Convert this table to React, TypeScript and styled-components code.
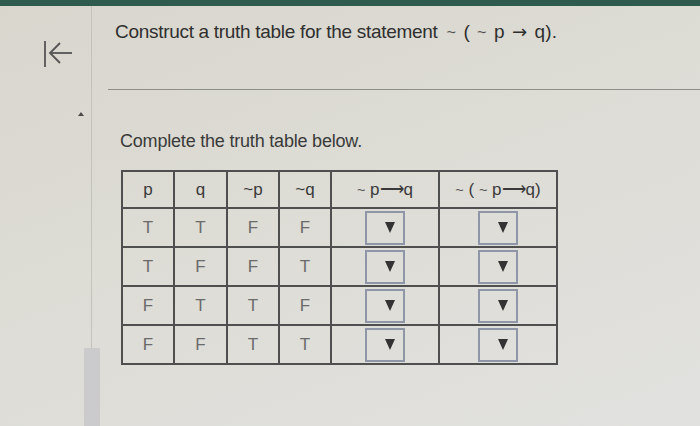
import React from 'react';
import styled, { createGlobalStyle } from 'styled-components';

const GlobalStyle = createGlobalStyle`
  html, body {
    margin: 0;
    padding: 0;
    width: 700px;
    height: 426px;
    overflow: hidden;
    font-family: 'Liberation Sans', Arial, sans-serif;
  }
`;

const Page = styled.div`
  width: 700px;
  height: 426px;
  display: flex;
  flex-direction: column;
  background: linear-gradient(160deg, #d8d6cd 0%, #dddcd5 45%, #e1e1df 100%);
`;

const TopBar = styled.div`
  height: 6px;
  background: #2e5b4d;
  flex-shrink: 0;
`;

const Body = styled.div`
  flex: 1;
  display: flex;
`;

const Sidebar = styled.div`
  width: 91px;
  flex-shrink: 0;
  border-right: 1px solid #c4c3bb;
  display: flex;
  flex-direction: column;
  align-items: flex-end;
`;

const BackButton = styled.div`
  margin: 34px 18px 0 0;
  width: 30px;
  height: 28px;
`;

const UpArrow = styled.div`
  margin: 44px 7px 0 0;
  width: 0;
  height: 0;
  border-left: 3px solid transparent;
  border-right: 3px solid transparent;
  border-bottom: 4px solid #4a4a4a;
`;

const ScrollThumb = styled.div`
  margin: auto -9px 0 0;
  width: 16px;
  height: 78px;
  background: #cbcbce;
`;

const Main = styled.div`
  flex: 1;
  padding-left: 16px;
`;

const Title = styled.div`
  margin: 15px 0 0 7px;
  font-size: 19px;
  line-height: 22px;
  color: #2f2f2f;
  letter-spacing: -0.3px;
`;

const Expr = styled.span`
  margin-left: 2px;
  word-spacing: 1.5px;
  letter-spacing: 0.3px;
`;

const Sym = styled.span`
  color: #555;
  font-size: 0.85em;
`;

const Arrow = styled.span`
  font-family: 'DejaVu Sans', sans-serif;
  font-size: 0.95em;
`;

const Rule = styled.div`
  margin-top: 46px;
  height: 1px;
  background: #8f8f8a;
`;

const Content = styled.div`
  padding-left: 12px;
`;

const Prompt = styled.div`
  margin-top: 40px;
  font-size: 18px;
  line-height: 22px;
  color: #3a3a3a;
  letter-spacing: -0.2px;
`;

const Table = styled.table`
  margin-top: 18px;
  margin-left: 1px;
  border-collapse: collapse;
  border: 2px solid #4f4f4f;
`;

const Cell = styled.td<{ $w: number; $head?: boolean }>`
  width: ${(p) => p.$w}px;
  height: ${(p) => (p.$head ? 35 : 37)}px;
  border: 2px solid #4f4f4f;
  padding: 0;
  text-align: center;
  font-size: 17px;
  color: ${(p) => (p.$head ? '#3a3a3a' : '#6a6a6a')};
`;

const Select = styled.div`
  margin: 0 auto;
  width: 40px;
  height: 34px;
  border: 2px solid #8e96a8;
  display: flex;
  align-items: center;
  justify-content: flex-end;
  padding-right: 8px;
  box-sizing: border-box;
`;

const Caret = styled.div`
  width: 0;
  height: 0;
  border-left: 5px solid transparent;
  border-right: 5px solid transparent;
  border-top: 11px solid #333;
`;

const widths = [50, 51, 50, 50, 106, 116];
const headers: React.ReactNode[] = [
  'p',
  'q',
  '~p',
  '~q',
  <span key="a">
    <Sym>~</Sym> p⟶q
  </span>,
  <span key="b">
    <Sym>~</Sym> ( <Sym>~</Sym> p⟶q)
  </span>,
];
const rows = [
  ['T', 'T', 'F', 'F'],
  ['T', 'F', 'F', 'T'],
  ['F', 'T', 'T', 'F'],
  ['F', 'F', 'T', 'T'],
];

export default function App() {
  return (
    <Page>
      <GlobalStyle />
      <TopBar />
      <Body>
        <Sidebar>
          <BackButton>
            <svg width="30" height="28" viewBox="0 0 30 28" fill="none" stroke="#555" strokeWidth="1.8">
              <path d="M2 1v26" />
              <path d="M7 13h22" />
              <path d="M17 3L7 13l10 10" />
            </svg>
          </BackButton>
          <UpArrow />
          <ScrollThumb />
        </Sidebar>
        <Main>
          <Title>
            Construct a truth table for the statement
            <Expr>
              {' '}
              <Sym>~</Sym> ( <Sym>~</Sym> p <Arrow>→</Arrow> q).
            </Expr>
          </Title>
          <Rule />
          <Content>
            <Prompt>Complete the truth table below.</Prompt>
            <Table>
              <tbody>
                <tr>
                  {headers.map((h, i) => (
                    <Cell key={i} $w={widths[i]} $head>
                      {h}
                    </Cell>
                  ))}
                </tr>
                {rows.map((r, ri) => (
                  <tr key={ri}>
                    {r.map((v, ci) => (
                      <Cell key={ci} $w={widths[ci]}>
                        {v}
                      </Cell>
                    ))}
                    <Cell $w={widths[4]}>
                      <Select>
                        <Caret />
                      </Select>
                    </Cell>
                    <Cell $w={widths[5]}>
                      <Select>
                        <Caret />
                      </Select>
                    </Cell>
                  </tr>
                ))}
              </tbody>
            </Table>
          </Content>
        </Main>
      </Body>
    </Page>
  );
}
